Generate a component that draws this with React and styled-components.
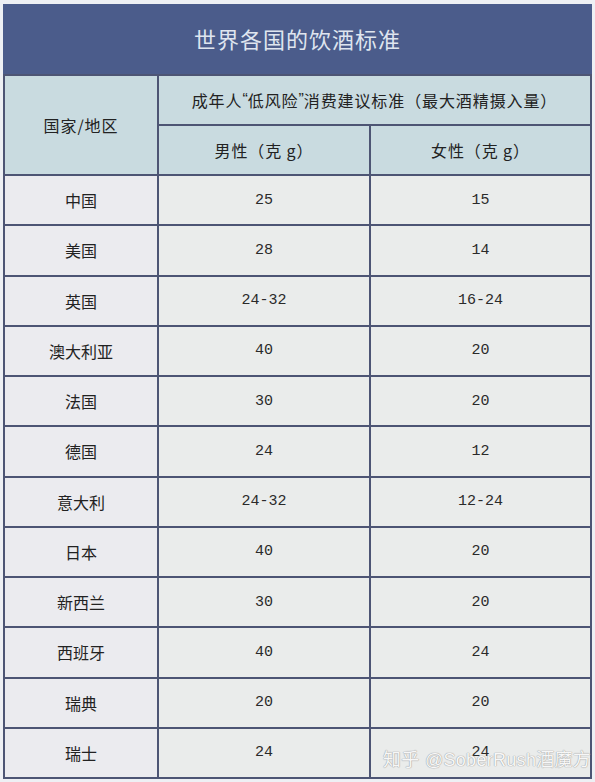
import React from 'react';
import styled, { createGlobalStyle } from 'styled-components';

const GlobalStyle = createGlobalStyle`
  html, body {
    margin: 0;
    padding: 0;
    background: #eef0f4;
  }
`;

const Page = styled.div`
  position: relative;
  width: 595px;
  height: 782px;
  padding: 4px 0 0 3px;
  box-sizing: border-box;
  font-family: "Noto Sans CJK SC", "Noto Sans", sans-serif;
`;

const Grid = styled.div`
  display: grid;
  width: 589px;
  box-sizing: border-box;
  grid-template-columns: 152px 210px 219px;
  grid-template-rows: 68px 48px 48px repeat(12, 48.25px);
  gap: 2px;
  padding: 2px;
  background: #4d5574;
`;

const Title = styled.div`
  grid-column: 1 / -1;
  display: flex;
  align-items: center;
  justify-content: center;
  background: #4b5c8b;
  color: #dfe5ef;
  font-size: 22px;
  letter-spacing: 1px;
  margin: -2px -2px 0;
  padding-bottom: 2px;
`;

const Cell = styled.div`
  display: flex;
  align-items: center;
  justify-content: center;
  background: ${({ $head, $first }) => ($head ? '#c9dbe0' : $first ? '#ebebef' : '#eaeceb')};
  color: #222;
  font-size: 16px;
  letter-spacing: ${({ $head }) => ($head ? '0.9px' : '0')};
  grid-row: ${({ $rows }) => ($rows ? `span ${$rows}` : 'auto')};
  grid-column: ${({ $cols }) => ($cols ? `span ${$cols}` : 'auto')};
`;

const Quote = styled.span`
  font-family: "Liberation Sans", sans-serif;
  letter-spacing: 0;
`;

const Num = styled.span`
  font-family: "Liberation Mono", "DejaVu Sans Mono", monospace;
  font-size: 15px;
  color: #2a2a2a;
`;

const Watermark = styled.div`
  position: absolute;
  left: 383px;
  top: 745px;
  font-size: 18px;
  color: #f7f7f7;
  text-shadow: 0 0 1px #9a9a9a, 0 0 1px #9a9a9a;
  letter-spacing: 0.3px;
  font-family: "Liberation Sans", "Noto Sans CJK SC", sans-serif;
  pointer-events: none;
`;

const rows = [
  ['中国', '25', '15'],
  ['美国', '28', '14'],
  ['英国', '24-32', '16-24'],
  ['澳大利亚', '40', '20'],
  ['法国', '30', '20'],
  ['德国', '24', '12'],
  ['意大利', '24-32', '12-24'],
  ['日本', '40', '20'],
  ['新西兰', '30', '20'],
  ['西班牙', '40', '24'],
  ['瑞典', '20', '20'],
  ['瑞士', '24', '24'],
];

export default function App() {
  return (
    <Page>
      <GlobalStyle />
      <Grid>
        <Title>世界各国的饮酒标准</Title>
        <Cell $head $rows={2}>国家/地区</Cell>
        <Cell $head $cols={2}>
          成年人<Quote>“</Quote>低风险<Quote>”</Quote>消费建议标准（最大酒精摄入量）
        </Cell>
        <Cell $head>男性（克 g）</Cell>
        <Cell $head>女性（克 g）</Cell>
        {rows.map(([name, m, f]) => (
          <React.Fragment key={name}>
            <Cell $first>{name}</Cell>
            <Cell><Num>{m}</Num></Cell>
            <Cell><Num>{f}</Num></Cell>
          </React.Fragment>
        ))}
      </Grid>
      <Watermark>知乎 @SoberRush酒魔方</Watermark>
    </Page>
  );
}
